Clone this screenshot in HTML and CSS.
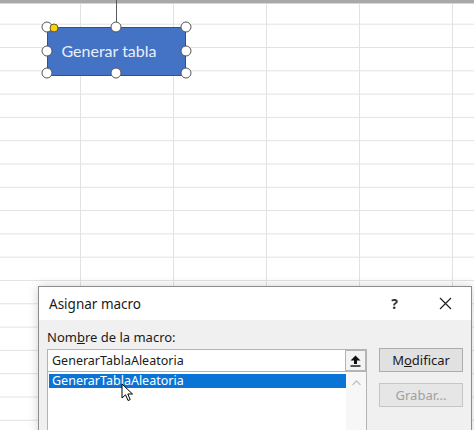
FILE: index.html
```html
<!DOCTYPE html>
<html lang="es">
  <head>
    <meta charset="UTF-8" />
    <title>Asignar macro</title>
    <link rel="stylesheet" href="styles.css">
  </head>
  <body>
    <!-- Worksheet grid -->
    <div class="sheet">
      <div class="sheet-top"></div>
    </div>

    <!-- Shape with selection handles -->
    <div class="connector"></div>
    <div class="shape">Generar tabla</div>
    <span class="handle h-tl"></span>
    <span class="handle h-tc"></span>
    <span class="handle h-tr"></span>
    <span class="handle h-ml"></span>
    <span class="handle h-mr"></span>
    <span class="handle h-bl"></span>
    <span class="handle h-bc"></span>
    <span class="handle h-br"></span>
    <span class="adjust"></span>

    <!-- Assign macro dialog -->
    <div class="dialog">
      <div class="titlebar">
        <span class="title">Asignar macro</span>
        <span class="help">?</span>
        <span class="close">
          <svg width="13" height="13" viewBox="0 0 13 13">
            <path d="M1 1 L12 12 M12 1 L1 12" stroke="#222" stroke-width="1.2" fill="none" />
          </svg>
        </span>
      </div>
      <div class="dialog-body">
        <div class="macro-col">
          <div class="label">Nom<u>b</u>re de la macro:</div>
          <div class="name-box">
            <span class="name-text">GenerarTablaAleatoria</span>
            <span class="collapse-btn">
              <svg width="11" height="12" viewBox="0 0 11 12">
                <path d="M5.5 0.5 L10.5 5.5 L7 5.5 L7 9 L4 9 L4 5.5 L0.5 5.5 Z" fill="#111" />
                <rect x="0.5" y="10.3" width="10" height="1.4" fill="#111" />
              </svg>
            </span>
          </div>
          <div class="macro-list">
            <div class="list-items">
              <div class="list-item selected">GenerarTablaAleatoria</div>
            </div>
            <div class="scrollbar">
              <svg width="9" height="6" viewBox="0 0 9 6">
                <path d="M0.5 5 L4.5 1 L8.5 5" stroke="#c4c4c4" stroke-width="1.3" fill="none" />
              </svg>
            </div>
          </div>
        </div>
        <div class="button-col">
          <button class="dlg-button">M<u>o</u>dificar</button>
          <button class="dlg-button disabled">Grabar...</button>
        </div>
      </div>
    </div>

    <!-- Mouse pointer -->
    <svg class="pointer" width="13" height="19" viewBox="0 0 13 19">
      <path d="M1 1 L1 15 L4.5 11.8 L7 17.5 L9.2 16.6 L6.8 11 L11.5 11 Z" fill="#fff" stroke="#000" stroke-width="1" stroke-linejoin="round" />
    </svg>
  </body>
</html>
```

FILE: styles.css
```css
body {
  margin: 0;
  width: 474px;
  height: 430px;
  overflow: hidden;
  position: relative;
  background-color: white;
  font-family: "Noto Sans", "Open Sans", sans-serif;
}

/* Worksheet */
.sheet {
  position: absolute;
  top: 0;
  left: 0;
  right: 0;
  bottom: 0;
  background-color: #fff;
  background-image:
    linear-gradient(to right, transparent 80px, #e2e2e2 80px, #e2e2e2 81px, transparent 81px),
    linear-gradient(to bottom, transparent 22.3px, #e2e2e2 22.3px);
  background-size: 93px 100%, 100% 23.3px;
  background-position: 0 0, 0 1.4px;
}

.sheet-top {
  height: 3px;
  background-color: #a9a9a9;
  border-bottom: 1px solid #d6d6d6;
}

/* Shape */
.connector {
  position: absolute;
  left: 116px;
  top: 0;
  width: 1px;
  height: 23px;
  background-color: #5a5a5a;
}

.shape {
  position: absolute;
  left: 47px;
  top: 27px;
  width: 122px;
  height: 44px;
  background-color: #4472c4;
  border: 1px solid #2f528f;
  color: #e9effb;
  font-family: Lato, "Open Sans", sans-serif;
  font-size: 16px;
  display: flex;
  align-items: center;
  justify-content: center;
  padding: 0 15px 3px 0;
  box-sizing: content-box;
}

.handle {
  position: absolute;
  width: 9px;
  height: 9px;
  border: 1.5px solid #555;
  border-radius: 50%;
  background-color: white;
  transform: translate(-50%, -50%);
}

.h-tl { left: 47px; top: 27px; }
.h-tc { left: 116px; top: 27px; }
.h-tr { left: 186px; top: 27px; }
.h-ml { left: 47px; top: 51px; }
.h-mr { left: 186px; top: 51px; }
.h-bl { left: 47px; top: 73px; }
.h-bc { left: 116px; top: 73px; }
.h-br { left: 186px; top: 73px; }

.adjust {
  position: absolute;
  left: 54px;
  top: 28px;
  width: 7px;
  height: 7px;
  border: 1px solid #6b5a10;
  border-radius: 50%;
  background-color: #f7d117;
  transform: translate(-50%, -50%);
}

/* Dialog */
.dialog {
  position: absolute;
  left: 38px;
  top: 286px;
  width: 432px;
  height: 160px;
  border: 1px solid #8c8c8c;
  background-color: #f0f0f0;
  box-shadow: 0 0 10px rgba(0, 0, 0, 0.18);
}

.titlebar {
  height: 33px;
  background-color: white;
  display: flex;
  align-items: center;
  padding-left: 10px;
  color: #1a1a1a;
}

.title {
  font-size: 13.5px;
  flex: 1;
}

.help {
  font-size: 14px;
  font-weight: bold;
  color: #333;
  margin-right: 41px;
}

.close {
  display: flex;
  margin-right: 19px;
}

.dialog-body {
  display: flex;
  padding: 8px 0 0 8px;
}

.macro-col {
  width: 320px;
}

.label {
  font-size: 13px;
  color: #1a1a1a;
  height: 19px;
  line-height: 19px;
  margin-bottom: 2px;
}

.name-box {
  height: 21px;
  background-color: white;
  border: 1px solid #b4b4b4;
  display: flex;
  align-items: center;
}

.name-text {
  flex: 1;
  font-size: 12.5px;
  color: #1a1a1a;
  padding-left: 4px;
}

.collapse-btn {
  width: 19px;
  height: 19px;
  border: 1px solid #b4b4b4;
  background-color: #f3f3f3;
  display: flex;
  align-items: center;
  justify-content: center;
}

.macro-list {
  height: 70px;
  background-color: white;
  border: 1px solid #b4b4b4;
  border-top: none;
  display: flex;
}

.list-items {
  flex: 1;
  padding: 2px 0 0 1px;
}

.list-item {
  height: 14px;
  line-height: 14px;
  font-size: 12.5px;
  padding-left: 3px;
}

.list-item.selected {
  background-color: #0a74d6;
  color: white;
}

.scrollbar {
  width: 20px;
  background-color: #f7f7f7;
  display: flex;
  justify-content: center;
  padding-top: 8px;
  box-sizing: border-box;
}

.button-col {
  display: flex;
  flex-direction: column;
  gap: 11px;
  margin-left: 12px;
  padding-top: 20px;
}

.dlg-button {
  width: 84px;
  height: 24px;
  font-family: "Noto Sans", "Open Sans", sans-serif;
  font-size: 13px;
  color: #1a1a1a;
  background-color: #e1e1e1;
  border: 1px solid #adadad;
  padding: 0;
}

.dlg-button.disabled {
  color: #a0a0a0;
  background-color: #e6e6e6;
  border-color: #c6c6c6;
}

.pointer {
  position: absolute;
  left: 121px;
  top: 383px;
}
```
